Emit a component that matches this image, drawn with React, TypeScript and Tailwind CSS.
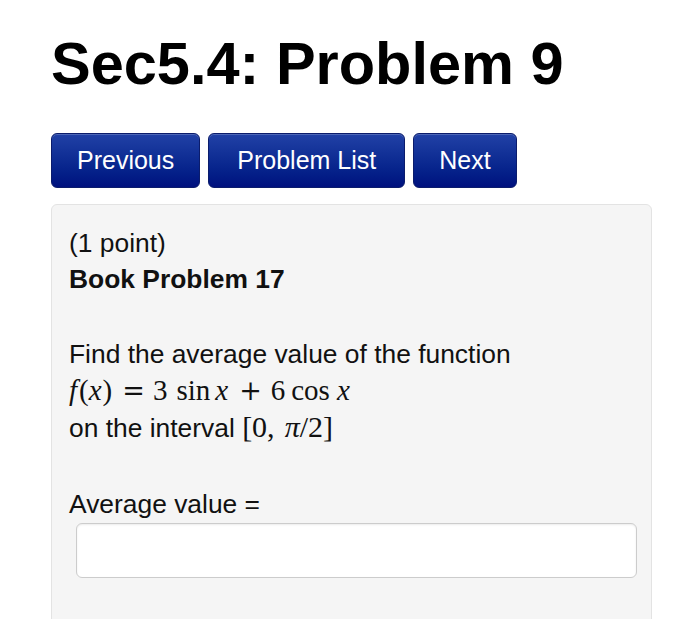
import React from 'react';

const NavButton: React.FC<{ label: string; pad?: string }> = ({ label, pad = 'px-[25px]' }) => (
  <button
    type="button"
    className={`h-[55px] ${pad} rounded-[6px] border border-[#0b1c6c] bg-linear-to-b from-[#2141a6] to-[#00107e] text-white text-[25px] leading-none shadow-[inset_0_1px_0_rgba(255,255,255,0.2)]`}
  >
    {label}
  </button>
);

const serif = "font-['Liberation_Serif','Times_New_Roman',serif]";
const op = "font-['DejaVu_Serif',serif] text-[27px]";

export default function App() {
  return (
    <div className="min-h-screen bg-white pl-[51px] pt-[34px] font-['Liberation_Sans',Arial,sans-serif] overflow-hidden">
      {/* Title */}
      <h1 className="text-[59.5px] leading-[60px] font-bold text-black">Sec5.4: Problem 9</h1>

      {/* Navigation */}
      <div className="mt-[39px] flex gap-2">
        <NavButton label="Previous" />
        <NavButton label="Problem List" pad="px-[28px]" />
        <NavButton label="Next" />
      </div>

      {/* Problem panel */}
      <div className="mt-4 w-[601px] rounded-[6px] border border-[#e3e3e3] bg-[#f5f5f5] pt-[20px] pl-[17px] pr-[13px] pb-[60px] text-[26.4px] leading-[36px] text-[#111]">
        <div>(1 point)</div>
        <div className="font-bold">Book Problem 17</div>

        <div className="mt-[39px]">Find the average value of the function</div>
        <div className={`${serif} text-[29px] whitespace-nowrap`}>
          <i>f</i>
          <span className="ml-[2px]">(</span>
          <i>x</i>
          <span className="ml-[1px]">)</span>
          <span className={`${op} ml-[10px]`}>=</span>
          <span className="ml-[8px]">3</span>
          <span className="ml-[9px]">sin</span>
          <i className="ml-[5px]">x</i>
          <span className={`${op} ml-[11px]`}>+</span>
          <span className="ml-[9px]">6</span>
          <span className="ml-[6px]">cos</span>
          <i className="ml-[7px]">x</i>
        </div>
        <div>
          on the interval{' '}
          <span className={`${serif} text-[30px]`}>
            [0,<i className="ml-[10px]">π</i>/2]
          </span>
        </div>

        <div className="mt-[40px]">Average value =</div>
        <input
          type="text"
          className="ml-[7px] mt-px block h-[55px] w-[561px] rounded-[6px] border border-[#cccccc] bg-white shadow-[inset_0_1px_2px_rgba(0,0,0,0.08)] outline-none"
        />
      </div>
    </div>
  );
}
